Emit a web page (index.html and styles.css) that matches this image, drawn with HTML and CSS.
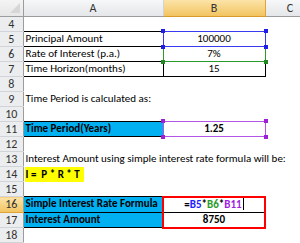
FILE: index.html
```html
<!DOCTYPE html>
<html>
<head>
<meta charset="utf-8">
<link rel="stylesheet" href="styles.css">
</head>
<body>
<div class="sheet">
<table class="grid">
<colgroup><col class="c-rh"><col class="c-a"><col class="c-b"><col class="c-c"></colgroup>
<thead>
<tr class="hdr"><th class="corner"><span class="tri"></span></th><th class="ch">A</th><th class="ch sel">B</th><th class="ch">C</th></tr>
</thead>
<tbody>
<tr><th class="rh">4</th><td></td><td></td><td></td></tr>
<tr><th class="rh">5</th><td class="bd txt">Principal Amount</td><td class="bd num"><span class="hl hl-blue"><i class="h tl"></i><i class="h tr"></i><i class="h bl"></i><i class="h br"></i></span>100000</td><td></td></tr>
<tr><th class="rh">6</th><td class="bd txt">Rate of Interest (p.a.)</td><td class="bd num"><span class="hl hl-green"><i class="h bl"></i><i class="h br"></i></span>7%</td><td></td></tr>
<tr><th class="rh">7</th><td class="bd txt">Time Horizon(months)</td><td class="bd num">15</td><td></td></tr>
<tr><th class="rh">8</th><td></td><td></td><td></td></tr>
<tr><th class="rh">9</th><td class="txt ovf" colspan="3">Time Period is calculated as:</td></tr>
<tr><th class="rh">10</th><td></td><td></td><td></td></tr>
<tr><th class="rh">11</th><td class="bd txt blue b">Time Period(Years)</td><td class="bd num b"><span class="hl hl-purple"><i class="h tl"></i><i class="h tr"></i><i class="h bl"></i><i class="h br"></i></span>1.25</td><td></td></tr>
<tr><th class="rh">12</th><td></td><td></td><td></td></tr>
<tr><th class="rh">13</th><td class="txt ovf" colspan="3">Interest Amount using simple interest rate formula will be:</td></tr>
<tr><th class="rh">14</th><td class="txt"><span class="yel">I =&nbsp; P * R * T</span></td><td></td><td></td></tr>
<tr><th class="rh">15</th><td></td><td></td><td></td></tr>
<tr><th class="rh rsel">16</th><td class="bd txt blue b">Simple Interest Rate Formula</td><td class="bd red-top num b edit"><span class="f-eq">=</span><span class="f-b">B5</span><span class="f-eq">*</span><span class="f-g">B6</span><span class="f-eq">*</span><span class="f-p">B11</span><span class="caret"></span></td><td></td></tr>
<tr><th class="rh">17</th><td class="bd txt blue b">Interest Amount</td><td class="bd red-bot num b">8750</td><td></td></tr>
<tr><th class="rh">18</th><td></td><td></td><td></td></tr>
</tbody>
</table>
</div>
</body>
</html>
```
FILE: styles.css
```css
html, body { margin: 0; padding: 0; background: #fff; }
body { width: 300px; height: 243px; overflow: hidden; }
.sheet { width: 300px; height: 243px; overflow: hidden; }
.grid {
  border-collapse: collapse;
  table-layout: fixed;
  width: 315px;
  font-family: Carlito, "Liberation Sans Narrow", "Liberation Sans", sans-serif;
  font-size: 11px;
  color: #000;
}
.c-rh { width: 23px; }
.c-a { width: 140px; }
.c-b { width: 102px; }
.c-c { width: 50px; }
.hdr th { height: 16px; }
tbody tr { height: 15px; }
th, td { padding: 0; overflow: visible; white-space: nowrap; line-height: 14px; }
td { position: relative; }
.corner { background: linear-gradient(#f4f4f4, #e6e6e6); border-right: 1px solid #9c9c9c; border-bottom: 1px solid #9c9c9c; position: relative; }
.tri { position: absolute; right: 3px; bottom: 3px; width: 0; height: 0; border-left: 10px solid transparent; border-bottom: 10px solid #d6d6d6; }
.ch {
  background: linear-gradient(#f6f7f8, #e4e6e9);
  border-right: 1px solid #d0d3d7;
  border-bottom: 1px solid #9c9c9c;
  font-weight: normal; color: #333; font-size: 12px;
}
.ch.sel { background: linear-gradient(#fbe3a8, #f2c460); border-right: 1px solid #e0a33a; border-bottom: 1px solid #d99a2c; }
.rh {
  background: #ebedef;
  border-right: 1px solid #9c9c9c;
  border-bottom: 1px solid #d0d3d7;
  font-weight: normal; color: #333; font-size: 12px; text-align: center;
}
.rh.rsel { background: linear-gradient(#fbe3a8, #f2c460); border-bottom: 1px solid #e0a33a; }
.txt { padding-left: 2px; text-align: left; }
.num { text-align: center; }
.b { font-weight: bold; }
.bd { border: 1px solid #000; }
.blue { background: #00b0f0; }
.ovf { overflow: visible; }
.hl { position: absolute; left: -1px; top: -1px; right: -1px; bottom: -1px; border: 1px solid; pointer-events: none; }
.hl-blue { border-color: #3a3af0; z-index: 3; }
.hl-green { border-color: #2a9a2a; z-index: 2; }
.hl-purple { border-color: #b455e6; z-index: 2; }
.h { position: absolute; width: 4px; height: 4px; }
.hl-blue .h { background: #1e1ee8; }
.hl-green .h { background: #208a20; }
.hl-purple .h { background: #9e1fd6; }
.tl { left: -3px; top: -3px; }
.tr { right: -3px; top: -3px; }
.bl { left: -3px; bottom: -3px; }
.br { right: -3px; bottom: -3px; }
.yel { display: inline-block; background: #ffff00; font-weight: bold; padding: 0 4px 0 1px; line-height: 15px; margin-left: -1px; }
.red-top { border: 2px solid #ff0000; border-bottom: 1px solid #000; }
.red-bot { border: 2px solid #ff0000; border-top: 1px solid #000; }
.f-eq { color: #000; }
.f-b { color: #2020ff; }
.f-g { color: #2a9a2a; }
.f-p { color: #a020e0; }
.caret { display: inline-block; width: 1px; height: 12px; background: #000; vertical-align: -2px; margin-left: 1px; }
```
